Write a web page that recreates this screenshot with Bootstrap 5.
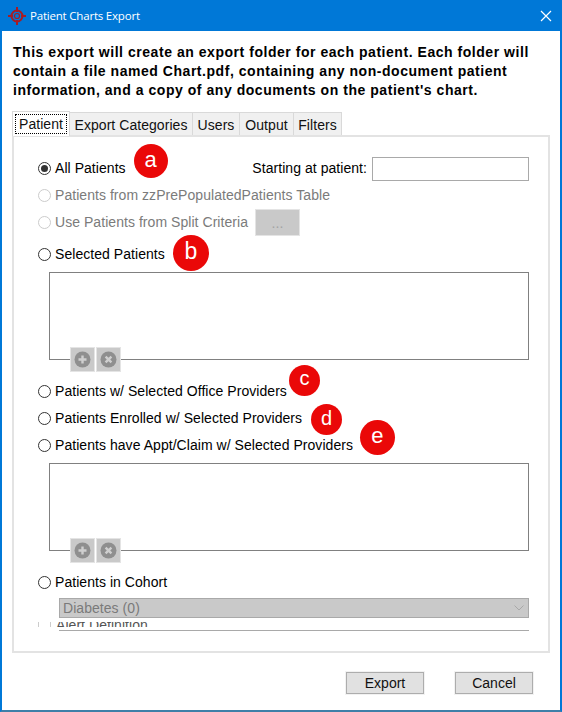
<!DOCTYPE html>
<html lang="en">
<head>
<meta charset="utf-8">
<title>Patient Charts Export</title>
<link href="https://cdn.jsdelivr.net/npm/bootstrap@5.3.0/dist/css/bootstrap.min.css" rel="stylesheet">
<style>
html,body{height:100%;margin:0}
body{background:#fff;font-family:"Liberation Sans",Arial,sans-serif;font-size:14px;color:#000;line-height:1.2}
.win{width:562px;height:712px;border-left:2px solid #0078d7;border-right:2px solid #0078d7;border-bottom:2px solid #3f7fa8;background:#fff;overflow:hidden}
.tbar{height:31px;margin:0 -2px;background:#0078d7;color:#fff;font-family:"Open Sans","Noto Sans",sans-serif;font-size:11.5px;letter-spacing:-.2px;padding-left:7px}
.tbar span{margin-left:3px}
.tclose{margin-left:auto;margin-right:10px}
.intro{font-weight:700;font-size:14px;line-height:19px;padding:12px 20px 0 11px;height:79px;letter-spacing:.54px}
.tabs-row{height:25px;padding-left:10px;align-items:flex-end}
.tabx{flex:none;height:23px;background:#f0f0f0;border:1px solid #d9d9d9;border-bottom:0;border-left:0;padding:0;line-height:25px;color:#111;text-align:center;white-space:nowrap;letter-spacing:.05px}
.tabx.on{width:58px;height:25px;background:#fff;border-left:1px solid #d9d9d9;padding:2px 2px 1px 2px;line-height:19px;position:relative;z-index:1;margin-bottom:-1px}
.tabx.on b{font-weight:400;border:1px dotted #000;display:block;padding:0 2px;height:20px}
.t2{width:123px}.t3{width:47px}.t4{width:54px}.t5{width:48px}
.pane{margin:0 10px;height:518px;border:2px solid #e3e3e3;padding:0}
.scroller{height:494px;overflow:hidden;padding:0 19px 0 24px;position:relative;letter-spacing:.05px}
.rowx{height:27px;align-items:center}
.rad{width:13px;height:13px;border-radius:50%;border:1px solid #333;background:#fff;flex:none;margin-right:4px;display:flex;align-items:center;justify-content:center}
.rad.sel::after{content:"";width:7px;height:7px;border-radius:50%;background:#333}
.rad.dis{border-color:#ccc}
.dim{color:#7b7b7b}
.tagc{border-radius:50%;background:#ea0808;color:#fff;text-align:center;flex:none;position:relative}
.tag-a{width:34px;height:34px;font-size:22px;line-height:31px;margin-left:8px;top:-8px}
.tag-b{width:36px;height:36px;font-size:23px;line-height:33px;margin-left:8px;top:-2px}
.tag-c{width:31px;height:31px;font-size:20px;line-height:27px;margin-left:2px;top:-11px}
.tag-d{width:31px;height:31px;font-size:20px;line-height:28px;margin-left:9px;top:1px}
.tag-e{width:35px;height:35px;font-size:22px;line-height:32px;margin-left:7px;top:-8px}
.field{width:157px;height:24px;border:1px solid #a9a9a9;margin-left:5px;background:#fff}
.dots{width:45px;height:27px;background:#c9c9c9;border:1px solid #e4e4e4;color:#a3a3a3;text-align:center;line-height:27px;margin-left:7px}
.listb{margin:4px 0 0 11px;width:480px;height:88px;border:1px solid #808080;border-bottom:0;position:relative;background:#fff}
.listb::after{content:"";position:absolute;left:0;right:0;bottom:0;border-bottom:1px solid #808080}
.mini{position:absolute;left:20px;bottom:-12px;z-index:1;gap:1px;background:#fff}
.mbtn{width:25px;height:25px;background:#c9c9c9;border:1px solid #e4e4e4;display:flex;align-items:center;justify-content:center}
.sel-x{margin:2px 0 0 21px;width:470px;height:20px;background:#c9c9c9;border:1px solid #a9a9a9;color:#7a7a7a;padding-left:3px;line-height:18px;font-size:14px;display:flex;align-items:center;justify-content:space-between}
.sel-x svg{margin-right:4px}
.clipx{height:5px;overflow:hidden;margin-top:4px;color:#555;line-height:16px}
.clipx .rad{border-radius:2px;border-color:#ccc;margin-top:-4px}
.clipx .txt{margin-top:-5px;padding-left:1px}
.under{margin:3px 0 0 21px;width:470px;border-top:1px solid #a9a9a9}
.footx{height:21px;margin-top:19px;padding-right:27px;justify-content:flex-end;gap:31px}
.dbtn{width:78px;height:22px;background:#e1e1e1;border:1px solid #adadad;outline:1px solid #f2f2f2;border-radius:0;padding:0;font-size:14px;line-height:20px;color:#111}
</style>
</head>
<body>
<div class="win d-flex flex-column">
  <div class="tbar d-flex align-items-center">
    <svg width="20" height="20" viewBox="0 0 20 20"><g fill="none" stroke="#a71c24"><circle cx="10" cy="10" r="5.5" stroke-width="2"/><circle cx="10" cy="10" r="2.5" stroke-width="1.2"/><path d="M10 1v5M10 14v5M1 10h5M14 10h5" stroke-width="2"/></g></svg>
    <span>Patient Charts Export</span>
    <svg class="tclose" width="12" height="12" viewBox="0 0 12 12"><path d="M1 1l10 10M11 1L1 11" stroke="#fff" stroke-width="1.2"/></svg>
  </div>
  <div class="intro">This export will create an export folder for each patient. Each folder will contain a file named Chart.pdf, containing any non-document patient information, and a copy of any documents on the patient's chart.</div>
  <div class="tabs-row d-flex">
    <div class="tabx on"><b>Patient</b></div>
    <div class="tabx t2">Export Categories</div>
    <div class="tabx t3">Users</div>
    <div class="tabx t4">Output</div>
    <div class="tabx t5">Filters</div>
  </div>
  <div class="pane">
    <div class="scroller">
      <div class="rowx d-flex" style="margin-top:18px">
        <div class="rad sel"></div><div>All Patients</div><div class="tagc tag-a">a</div>
        <div class="ms-auto d-flex align-items-center"><div>Starting at patient:</div><div class="field"></div></div>
      </div>
      <div class="rowx d-flex"><div class="rad dis"></div><div class="dim">Patients from zzPrePopulatedPatients Table</div></div>
      <div class="rowx d-flex"><div class="rad dis"></div><div class="dim">Use Patients from Split Criteria</div><div class="dots">...</div></div>
      <div class="rowx d-flex" style="margin-top:5px"><div class="rad"></div><div>Selected Patients</div><div class="tagc tag-b">b</div></div>
      <div class="listb">
        <div class="mini d-flex">
          <div class="mbtn"><svg width="17" height="17" viewBox="0 0 17 17"><circle cx="8.5" cy="8.5" r="8" fill="#8f8f8f"/><path d="M8.5 4.5v8M4.5 8.5h8" stroke="#cfcfcf" stroke-width="2.4"/></svg></div>
          <div class="mbtn"><svg width="17" height="17" viewBox="0 0 17 17"><circle cx="8.5" cy="8.5" r="8" fill="#8f8f8f"/><path d="M5.6 5.6l5.8 5.8M11.4 5.6l-5.8 5.8" stroke="#cfcfcf" stroke-width="2.4"/></svg></div>
        </div>
      </div>
      <div class="rowx d-flex" style="margin-top:18px"><div class="rad"></div><div>Patients w/ Selected Office Providers</div><div class="tagc tag-c">c</div></div>
      <div class="rowx d-flex"><div class="rad"></div><div>Patients Enrolled w/ Selected Providers</div><div class="tagc tag-d">d</div></div>
      <div class="rowx d-flex"><div class="rad"></div><div>Patients have Appt/Claim w/ Selected Providers</div><div class="tagc tag-e">e</div></div>
      <div class="listb">
        <div class="mini d-flex">
          <div class="mbtn"><svg width="17" height="17" viewBox="0 0 17 17"><circle cx="8.5" cy="8.5" r="8" fill="#8f8f8f"/><path d="M8.5 4.5v8M4.5 8.5h8" stroke="#cfcfcf" stroke-width="2.4"/></svg></div>
          <div class="mbtn"><svg width="17" height="17" viewBox="0 0 17 17"><circle cx="8.5" cy="8.5" r="8" fill="#8f8f8f"/><path d="M5.6 5.6l5.8 5.8M11.4 5.6l-5.8 5.8" stroke="#cfcfcf" stroke-width="2.4"/></svg></div>
        </div>
      </div>
      <div class="rowx d-flex" style="margin-top:18px"><div class="rad"></div><div>Patients in Cohort</div></div>
      <div class="sel-x"><span>Diabetes (0)</span><svg width="10" height="6" viewBox="0 0 10 6"><path d="M.5.5L5 5 9.5.5" fill="none" stroke="#a8a8a8"/></svg></div>
      <div class="clipx d-flex"><div class="rad"></div><div class="txt">Alert Definition</div></div>
      <div class="under"></div>
    </div>
  </div>
  <div class="footx d-flex">
    <button class="dbtn btn" type="button">Export</button>
    <button class="dbtn btn" type="button">Cancel</button>
  </div>
</div>
</body>
</html>
